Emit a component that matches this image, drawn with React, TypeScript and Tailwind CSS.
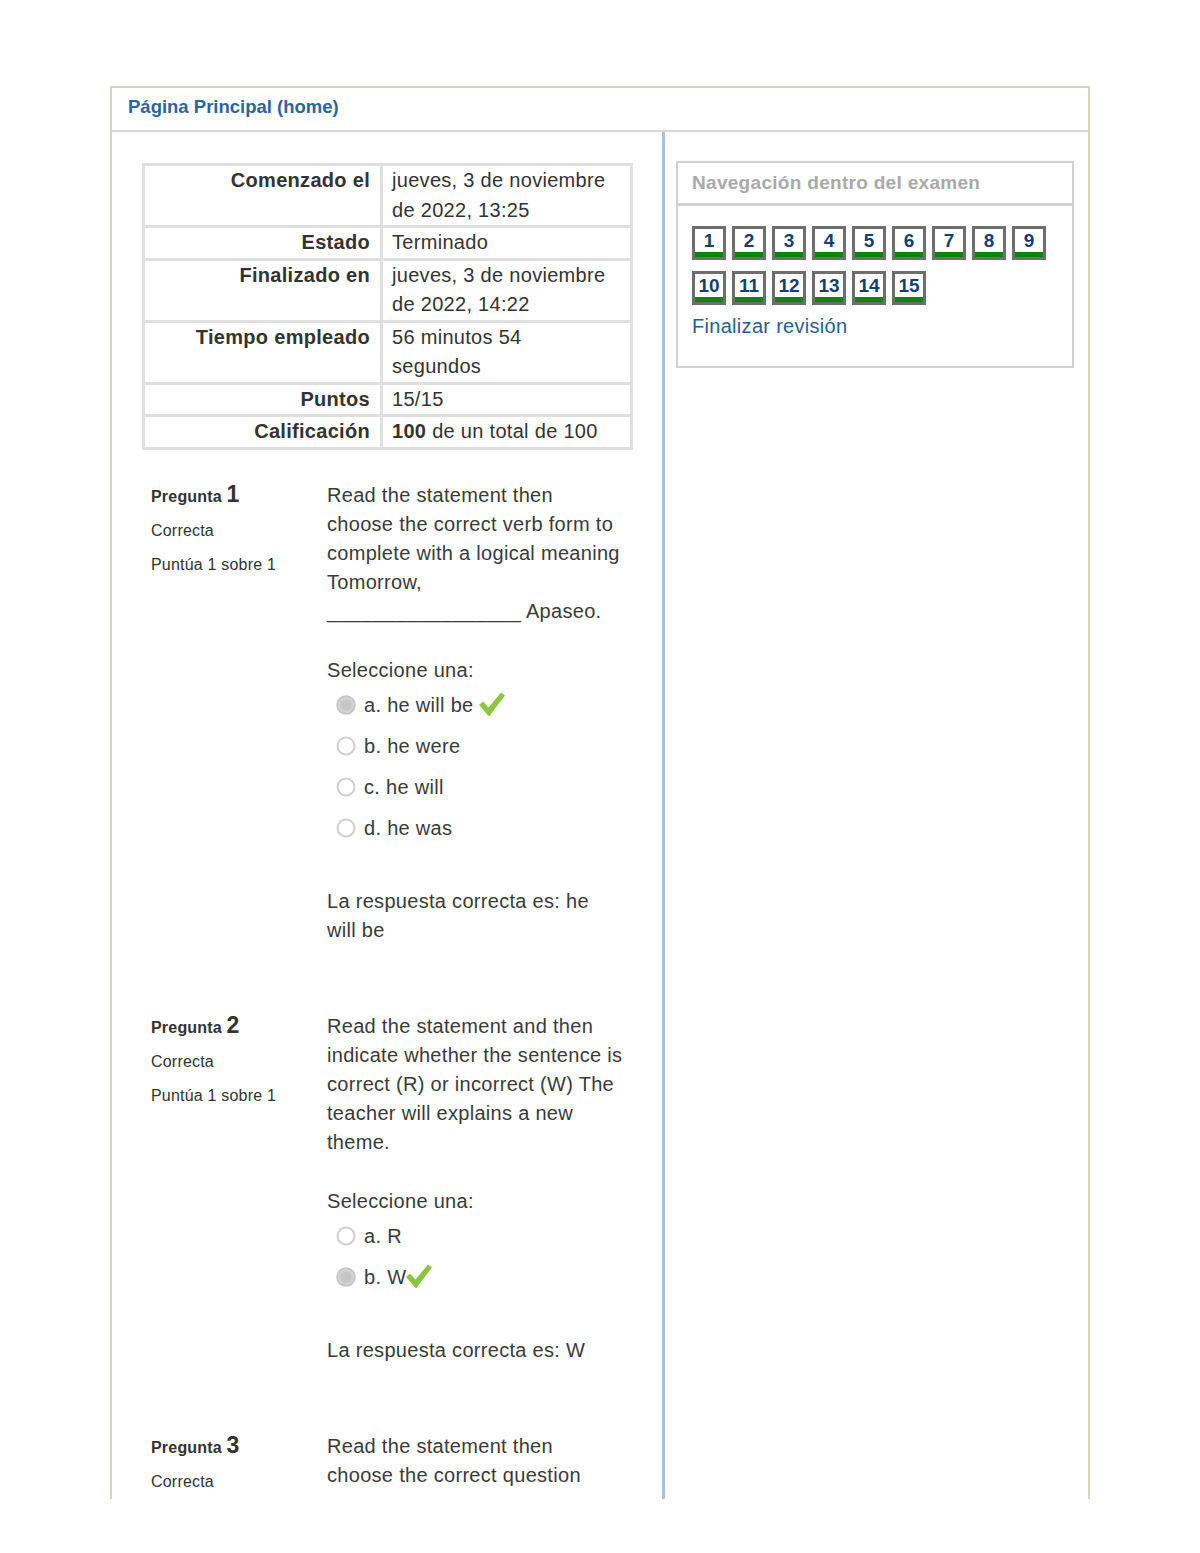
import React from 'react';

const font = { fontFamily: '"Liberation Sans", Arial, sans-serif' };

function Radio({ checked }: { checked?: boolean }) {
  return (
    <svg width="20" height="20" viewBox="0 0 20 20" className="shrink-0">
      {checked ? (
        <>
          <circle cx="10" cy="10" r="9" fill="#d2d2d2" stroke="#c4c4c4" strokeWidth="1.5" />
          <circle cx="10" cy="10" r="5.5" fill="#c6c6c6" />
        </>
      ) : (
        <circle cx="10" cy="10" r="8.5" fill="#fff" stroke="#cfcfcf" strokeWidth="2" />
      )}
    </svg>
  );
}

function Check() {
  return (
    <svg width="26" height="26" viewBox="0 0 26 26" className="shrink-0">
      <polygon points="0,13 4,9.5 9.5,15.5 22,0.5 26,3.5 10,24.5" fill="#8cc63f" />
    </svg>
  );
}

const summary: { label: string; value: React.ReactNode }[] = [
  { label: 'Comenzado el', value: <>jueves, 3 de noviembre<br />de 2022, 13:25</> },
  { label: 'Estado', value: 'Terminado' },
  { label: 'Finalizado en', value: <>jueves, 3 de noviembre<br />de 2022, 14:22</> },
  { label: 'Tiempo empleado', value: <>56 minutos 54<br />segundos</> },
  { label: 'Puntos', value: '15/15' },
  { label: 'Calificación', value: <><b className="font-bold">100</b> de un total de 100</> },
];

interface Question {
  num: number;
  text: string[];
  options: { label: string; checked?: boolean }[];
  answer: string[];
  partial?: boolean;
}

const questions: Question[] = [
  {
    num: 1,
    text: [
      'Read the statement then',
      'choose the correct verb form to',
      'complete with a logical meaning',
      'Tomorrow,',
      '_________________ Apaseo.',
    ],
    options: [
      { label: 'a. he will be', checked: true },
      { label: 'b. he were' },
      { label: 'c. he will' },
      { label: 'd. he was' },
    ],
    answer: ['La respuesta correcta es: he', 'will be'],
  },
  {
    num: 2,
    text: [
      'Read the statement and then',
      'indicate whether the sentence is',
      'correct (R) or incorrect (W) The',
      'teacher will explains a new',
      'theme.',
    ],
    options: [{ label: 'a. R' }, { label: 'b. W', checked: true }],
    answer: ['La respuesta correcta es: W'],
  },
  {
    // la página termina aquí, solo se ve el comienzo
    num: 3,
    text: ['Read the statement then', 'choose the correct question'],
    options: [],
    answer: [],
    partial: true,
  },
];

function QuestionBlock({ q }: { q: Question }) {
  return (
    <div className={`flex pl-[39px] ${q.num === 1 ? 'mt-[31px]' : 'mt-[67px]'}`}>
      <div className="w-[176px] shrink-0 text-[16px] text-[#333] tracking-[0.2px]">
        <div className="h-[26px] leading-[26px] font-bold">
          Pregunta <span className="text-[23px]">{q.num}</span>
        </div>
        <div className="mt-[7px] leading-[34px]">Correcta</div>
        {!q.partial && <div className="leading-[34px]">Puntúa 1 sobre 1</div>}
      </div>
      <div className="text-[20px] text-[#3a3a3a] whitespace-nowrap tracking-[0.3px]">
        <div className="leading-[29px]">
          {q.text.map((t) => (
            <div key={t}>{t}</div>
          ))}
        </div>
        {!q.partial && (
          <>
            <div className="mt-[30px] leading-[29px]">Seleccione una:</div>
            <div>
              {q.options.map((o) => (
                <div key={o.label} className="flex items-center h-[41px] pl-[9px] gap-[8px]">
                  <Radio checked={o.checked} />
                  <span className="flex items-center">
                    {o.label}
                    {o.checked && (
                      <span className={o.label.length > 5 ? 'ml-[5px]' : 'ml-0'}>
                        <Check />
                      </span>
                    )}
                  </span>
                </div>
              ))}
            </div>
            <div className="mt-[38px] leading-[29px]">
              {q.answer.map((a) => (
                <div key={a}>{a}</div>
              ))}
            </div>
          </>
        )}
      </div>
    </div>
  );
}

export default function App() {
  return (
    <div className="w-[1200px] h-[1553px] bg-white pt-[86px] pl-[110px]" style={font}>
      <div className="w-[980px] h-[1413px] border-x-2 border-t-2 border-[#d9d5b9] overflow-hidden flex flex-col">
        {/* cabecera */}
        <div className="h-[44px] shrink-0 border-b-2 border-[#d6d6d6] pl-[16px] pb-[5px] flex items-center">
          <span className="text-[18.5px] font-bold text-[#2c64a0]">Página Principal (home)</span>
        </div>

        <div className="flex flex-1">
          {/* columna izquierda */}
          <div className="w-[550px] shrink-0">
            <div className="pl-[30px] pt-[31px]">
              <div className="w-[491px] bg-[#dfdfdf] p-[3px] grid grid-cols-[235px_1fr] gap-[3px] text-[20px] leading-[29.5px] text-[#333] tracking-[0.3px]">
                {summary.map((row) => (
                  <React.Fragment key={row.label}>
                    <div className="bg-white text-right pr-[10px] font-bold">{row.label}</div>
                    <div className="bg-white pl-[9px] whitespace-nowrap">{row.value}</div>
                  </React.Fragment>
                ))}
              </div>
            </div>
            {questions.map((q) => (
              <QuestionBlock key={q.num} q={q} />
            ))}
          </div>

          {/* separador azul */}
          <div className="w-[3px] shrink-0 bg-[#9fc3e1]" />

          {/* columna derecha */}
          <div className="flex-1">
            <div className="mt-[29px] ml-[11px] w-[398px] border-2 border-[#d2d2d2]">
              <div className="h-[43px] border-b-[3px] border-[#d2d2d2] pl-[14px] flex items-center">
                <span className="text-[19px] font-bold text-[#a9a9a9] tracking-[0.3px]">
                  Navegación dentro del examen
                </span>
              </div>
              <div className="pl-[14px] pt-[20px] pb-[26px]">
                <div className="flex flex-wrap gap-x-[6px] gap-y-[11px] w-[366px]">
                  {Array.from({ length: 15 }, (_, i) => i + 1).map((n) => (
                    <div
                      key={n}
                      className="w-[34px] h-[34px] border-[3px] border-[#6e6e6e] bg-white flex flex-col"
                    >
                      <div className="flex-1 flex items-center justify-center text-[19px] font-bold text-[#123f73] leading-none">
                        {n}
                      </div>
                      <div className="h-[5px] bg-[#0b840b]" />
                    </div>
                  ))}
                </div>
                <div className="mt-[7px] text-[20px] leading-[28px] text-[#2a5d94] tracking-[0.3px]">
                  Finalizar revisión
                </div>
              </div>
            </div>
          </div>
        </div>
      </div>
    </div>
  );
}
